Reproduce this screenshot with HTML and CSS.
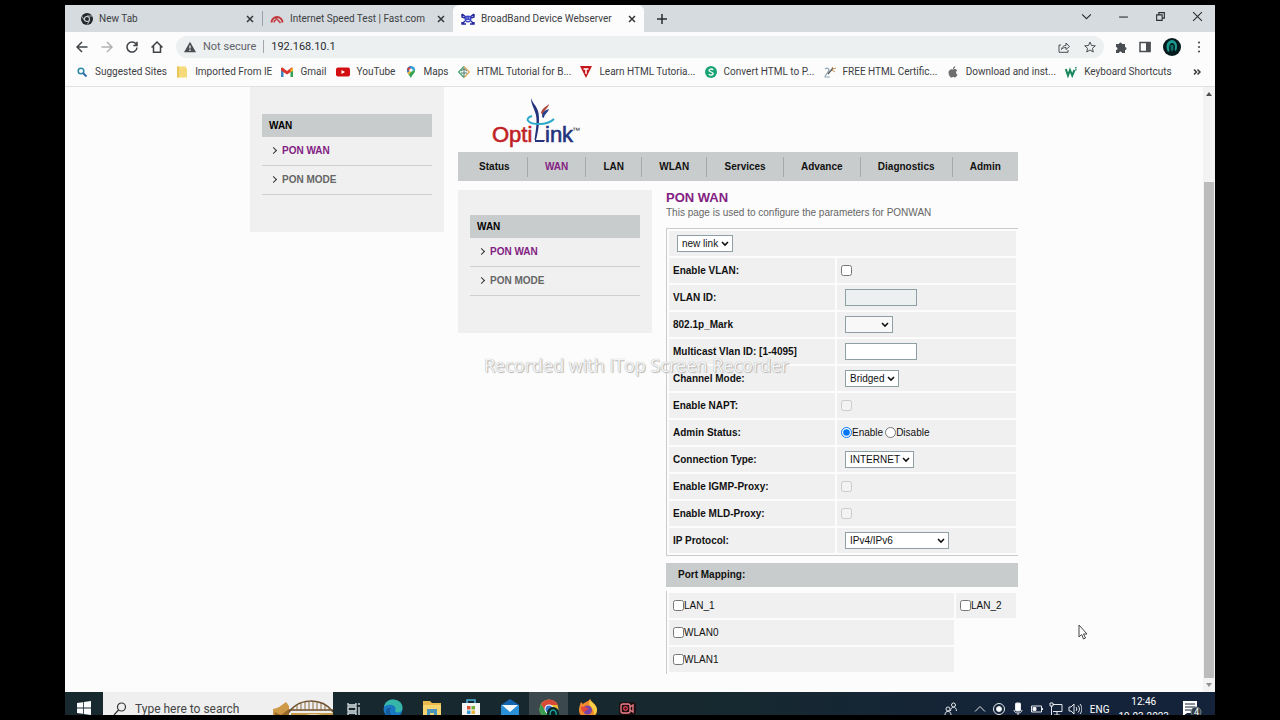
FILE: index.html
```html
<!DOCTYPE html>
<html lang="en">
<head>
  <meta charset="UTF-8">
  <meta name="viewport" content="width=device-width, initial-scale=1.0">
  <title>BroadBand Device Webserver</title>
  <link rel="stylesheet" href="styles.css">
</head>
<body>
  <div class="screen">
    <header class="tabs">
      <div class="tab">
        <svg class="icon" viewBox="0 0 12 12"><circle cx="6" cy="6" r="6" fill="#24282c"/><circle cx="6" cy="6" r="3" fill="#d6dbdf"/><circle cx="6" cy="6" r="2" fill="#24282c"/><path d="M6 3h5M3.4 7.5L1 3.4M8.6 7.5L6.2 11.6" stroke="#d6dbdf" stroke-width=".8"/></svg>
        <span class="tab-title">New Tab</span>
        <button class="tab-close" aria-label="Close tab"><svg viewBox="0 0 8 8"><path d="M1 1l6 6M7 1L1 7"/></svg></button>
      </div>
      <div class="tab divided">
        <svg class="icon wide" viewBox="0 0 14 12"><path d="M1.500 9.500A5.500 5.500 0 0 1 12.500 9.500" fill="none" stroke="#c2373b" stroke-width="2"/><path d="M4 9.500A3 3 0 0 1 6 6.800M10.500 10L5.500 4.500" fill="none" stroke="#c2373b" stroke-width="1.500"/></svg>
        <span class="tab-title">Internet Speed Test | Fast.com</span>
        <button class="tab-close" aria-label="Close tab"><svg viewBox="0 0 8 8"><path d="M1 1l6 6M7 1L1 7"/></svg></button>
      </div>
      <div class="tab active">
        <svg class="icon wide" viewBox="0 0 14 12"><path d="M1 1l4 3M13 1L9 4M4 8l-3 3M10 8l3 3M1 1v3l3 1M13 1v3l-3 1M1 9v2h4M13 9v2H9" fill="none" stroke="#20249a" stroke-width="1.400"/><circle cx="7" cy="6" r="3.400" fill="#3b45c8"/><path d="M5.500 5h1M8 5h1M5.500 7.500h3" stroke="#fff" stroke-width=".9"/></svg>
        <span class="tab-title">BroadBand Device Webserver</span>
        <button class="tab-close" aria-label="Close tab"><svg viewBox="0 0 8 8"><path d="M1 1l6 6M7 1L1 7"/></svg></button>
      </div>
      <button class="new-tab" aria-label="New tab"><svg viewBox="0 0 10 10"><path d="M5 0v10M0 5h10"/></svg></button>
      <div class="window-buttons">
        <button aria-label="Search tabs"><svg viewBox="0 0 10 10"><path d="M1 3l4 4 4-4"/></svg></button>
        <button aria-label="Minimize"><svg viewBox="0 0 10 10"><path d="M1 5.500h8"/></svg></button>
        <button aria-label="Restore"><svg viewBox="0 0 10 10"><path d="M1.500 3.500h5v5h-5zM3.500 3.500v-2h5v5h-2"/></svg></button>
        <button aria-label="Close"><svg viewBox="0 0 10 10"><path d="M1 1l8 8M9 1L1 9"/></svg></button>
      </div>
    </header>

    <div class="toolbar">
      <div class="nav-buttons">
        <button aria-label="Back"><svg viewBox="0 0 12 12"><path d="M11.500 6H1.500M6 1L1 6l5 5"/></svg></button>
        <button class="off" aria-label="Forward" disabled><svg viewBox="0 0 12 12"><path d="M.5 6h10M6 1l5 5-5 5"/></svg></button>
        <button aria-label="Reload"><svg viewBox="0 0 12 12"><path d="M10.300 3.500A5 5 0 1 0 11 6.500M11 .8v3.700H7.300"/></svg></button>
        <button aria-label="Home"><svg viewBox="0 0 12 12"><path d="M.5 6.500L6 1l5.500 5.500M2.500 5v6.300h7V5"/></svg></button>
      </div>
      <div class="omnibox">
        <svg class="icon" viewBox="0 0 12 12"><path d="M6 .8L12 11.300H0z" fill="#4a4e52"/><path d="M6 4.500v3M6 8.500V10" stroke="#fff" stroke-width="1.200"/></svg>
        <span class="not-secure">Not secure</span>
        <input type="text" value="192.168.10.1" aria-label="Address">
        <svg class="icon line" viewBox="0 0 12 12"><path d="M3 4H1v7.300h9V9M3.500 8.500C4 5.500 6 4.500 8 4.500V2l3.500 3.500L8 8.500v-2C6 6.500 4.700 7 3.500 8.500z"/></svg>
        <svg class="icon line star" viewBox="0 0 12 12"><path d="M6 1l1.500 3.500 3.800.3-2.900 2.500.9 3.700L6 9l-3.300 2 .9-3.700L.7 4.800l3.800-.3z"/></svg>
      </div>
      <div class="tool-icons">
        <svg class="icon" viewBox="0 0 12 12"><path d="M1 3h3a1.500 1.500 0 1 1 3 0h3v3a1.500 1.500 0 1 1 0 3v3H7a1.500 1.500 0 1 0-3 0H1V9a1.500 1.500 0 1 0 0-3z" fill="#4a4e52"/></svg>
        <svg class="icon" viewBox="0 0 12 12"><path d="M1 1.500h10v9H1z" fill="none" stroke="#4a4e52" stroke-width="1.500"/><path d="M7 1h4.500v10H7z" fill="#4a4e52"/></svg>
        <svg class="avatar" viewBox="0 0 18 18"><circle cx="9" cy="9" r="9" fill="#051a1c"/><path d="M5 14C1 6 6 2 9 2s7 4 4 11l-1.500-1C13 7 11 5 9 5s-3.500 3-2.500 8z" fill="#1a9a90"/><path d="M7.500 7h3v4l-1.500 3-1.500-3z" fill="#0f6d68"/></svg>
        <svg class="icon" viewBox="0 0 12 12"><g fill="#4a4e52"><circle cx="6" cy="1.500" r="1.100"/><circle cx="6" cy="6" r="1.100"/><circle cx="6" cy="10.500" r="1.100"/></g></svg>
      </div>
    </div>

    <nav class="bookmarks">
      <a href="#"><svg class="icon" viewBox="0 0 12 12"><circle cx="5" cy="5" r="2.800" fill="none" stroke="#2b87a8" stroke-width="1.500"/><path d="M7 7l3.500 3.500" stroke="#2b66a8" stroke-width="1.800"/></svg>Suggested Sites</a>
      <a href="#"><svg class="icon" viewBox="0 0 12 12"><path d="M1 .5h9v2h1v9H1z" fill="#f6d978"/><path d="M1 .5h2v11H1z" fill="#e8c65c"/></svg>Imported From IE</a>
      <a href="#"><svg class="icon" viewBox="0 0 12 12"><path d="M0 3h2.500v8H0z" fill="#4285c4"/><path d="M9.500 3H12v8H9.500z" fill="#35a257"/><path d="M0 2l1.500-.5L6 5l4.500-3.500L12 2v2.500L6 8.500 0 4.500z" fill="#d8362f"/><path d="M9.500 3L12 2v3L9.500 6z" fill="#f2b824"/></svg>Gmail</a>
      <a href="#"><svg class="icon wide" viewBox="0 0 14 12"><rect y="1.500" width="14" height="9" rx="2" fill="#d30e12"/><path d="M5.500 4v4L9 6z" fill="#fff"/></svg>YouTube</a>
      <a href="#"><svg class="icon" viewBox="0 0 12 12"><path d="M6 12C5 8.500 1.800 7.500 1.800 4.300A4.200 4.200 0 0 1 6 0v4z" fill="#3a76d5"/><path d="M6 0a4.200 4.200 0 0 1 4.200 4.300H6z" fill="#37a3d8"/><path d="M10.200 4.300C10 7.500 7 8.500 6 12L3 7.500l4-3.200z" fill="#30a354"/><path d="M2.500 7L5 4.500 6 6 4 8.800z" fill="#f3bb2b"/><path d="M2 3l2-2 2 2-2 2z" fill="#d8452f"/><circle cx="6" cy="4.200" r="1.600" fill="#fff"/></svg>Maps</a>
      <a href="#"><svg class="icon" viewBox="0 0 12 12"><path d="M6 .5L.7 6 6 11.500" fill="none" stroke="#4fa578" stroke-width="1.400"/><path d="M6 .5L11.300 6 6 11.500" fill="none" stroke="#dcaa63" stroke-width="1.400"/><path d="M6 2v9M3 5l3-2 3 2M3 7h6" fill="none" stroke="#4c7d70"/></svg>HTML Tutorial for B...</a>
      <a href="#"><svg class="icon" viewBox="0 0 12 12"><path d="M0 0h12L6 12z" fill="#c5161b"/><path d="M3.500 3h5M6 3v5" stroke="#fff" stroke-width="1.500"/></svg>Learn HTML Tutoria...</a>
      <a href="#"><svg class="icon" viewBox="0 0 12 12"><circle cx="6" cy="6" r="6" fill="#18a573"/><path d="M8.300 3.700C6.500 2.500 4 3 4 4.500S8.200 6 8.200 7.600 5.300 9.500 3.700 8.300" fill="none" stroke="#fff" stroke-width="1.300"/></svg>Convert HTML to P...</a>
      <a href="#"><svg class="icon" viewBox="0 0 12 12"><path d="M1 3c3-2 5 0 3 3S1 10 1 11h5" fill="none" stroke="#8fa7b5" stroke-width="1.200"/><path d="M4 8l5-6" stroke="#555" stroke-width="1.300"/><path d="M8 1l1.500 2L12 2M8 4l3 2" fill="none" stroke="#c78b4c"/></svg>FREE HTML Certific...</a>
      <a href="#"><svg class="icon" viewBox="0 0 12 12"><path d="M6 3.500c1-.7 3-.8 4.200.8-1.700 1.200-1.400 3.500.3 4.300C9.800 10.500 8.500 12 7.500 11.500 6.500 11 5.800 11 5 11.400 3.500 12.200 1.500 9 1.500 6.500S4 2.500 6 3.500zM6 3C6 1.500 7 .3 8.200.2 8.300 1.700 7.200 3 6 3z" fill="#6d6f71"/></svg>Download and inst...</a>
      <a href="#"><svg class="icon" viewBox="0 0 12 12"><path d="M.8 3l2.200 6.500L5 4l2.200 5.500L9.500 4" fill="none" stroke="#16865c" stroke-width="2"/><path d="M10 1.500h1.500L10.500 3l1 1H10" fill="none" stroke="#16865c" stroke-width=".8"/></svg>Keyboard Shortcuts</a>
      <button class="more" aria-label="More bookmarks"><svg viewBox="0 0 8 8"><path d="M1 1.500L3.500 4 1 6.500M4.500 1.500L7 4 4.500 6.500"/></svg></button>
    </nav>

    <div class="viewport">
      <main class="page">
        <aside class="side outer">
          <h3>WAN</h3>
          <ul>
            <li class="current"><a href="#">PON WAN</a></li>
            <li><a href="#">PON MODE</a></li>
          </ul>
        </aside>

        <div class="site">
          <div class="logo">
            <svg viewBox="0 0 90 52" role="img" aria-label="OptiLink">
              <text x="0" y="45" class="logo-red">Opti</text>
              <text x="53" y="45" class="logo-blue">ink</text>
              <text x="80" y="36" class="logo-tm">™</text>
              <path d="M39 1c2 6 5 7 7 13 2 7 1 18-2 29h-1.500C44 32 46 22 43 15c-1-4-4-8-4-14z" fill="#23337c"/>
              <path d="M49 16c1-5 5-6 8-9-1 5-5 5-6 11z" fill="#b0453a"/>
              <path d="M50 20c0-5 3-7 7-8-1 4-5 5-5 9z" fill="#28408c"/>
              <path d="M40 19c-9 3-3 8 7 8 8 0 13-3 15-5" fill="none" stroke="#2ba9c9" stroke-width="2"/>
              <path d="M43 43h10l-1 2h-9z" fill="#23337c"/>
            </svg>
          </div>
          <nav class="menu">
            <a href="#">Status</a>
            <a href="#" class="current">WAN</a>
            <a href="#">LAN</a>
            <a href="#">WLAN</a>
            <a href="#">Services</a>
            <a href="#">Advance</a>
            <a href="#">Diagnostics</a>
            <a href="#">Admin</a>
          </nav>

          <div class="columns">
            <aside class="side">
              <h3>WAN</h3>
              <ul>
                <li class="current"><a href="#">PON WAN</a></li>
                <li><a href="#">PON MODE</a></li>
              </ul>
            </aside>

            <form class="content">
              <h1>PON WAN</h1>
              <p class="intro">This page is used to configure the parameters for PONWAN</p>

              <table class="settings">
                <tr><td colspan="2"><select class="w-link" aria-label="Link"><option>new link</option></select></td></tr>
                <tr><th><label for="vlan">Enable VLAN:</label></th><td><input type="checkbox" id="vlan"></td></tr>
                <tr><th><label for="vid">VLAN ID:</label></th><td><input type="text" id="vid" disabled></td></tr>
                <tr><th><label for="mark">802.1p_Mark</label></th><td><select id="mark" class="w-mark" disabled><option></option></select></td></tr>
                <tr><th><label for="mvid">Multicast Vlan ID: [1-4095]</label></th><td><input type="text" id="mvid"></td></tr>
                <tr><th><label for="mode">Channel Mode:</label></th><td><select id="mode" class="w-mode"><option>Bridged</option></select></td></tr>
                <tr><th><label for="napt">Enable NAPT:</label></th><td><input type="checkbox" id="napt" disabled></td></tr>
                <tr><th>Admin Status:</th><td><div class="choices"><label><input type="radio" name="status" checked>Enable</label><label><input type="radio" name="status">Disable</label></div></td></tr>
                <tr><th><label for="ctype">Connection Type:</label></th><td><select id="ctype" class="w-type"><option>INTERNET</option></select></td></tr>
                <tr><th><label for="igmp">Enable IGMP-Proxy:</label></th><td><input type="checkbox" id="igmp" disabled></td></tr>
                <tr><th><label for="mld">Enable MLD-Proxy:</label></th><td><input type="checkbox" id="mld" disabled></td></tr>
                <tr><th><label for="proto">IP Protocol:</label></th><td><select id="proto" class="w-proto"><option>IPv4/IPv6</option></select></td></tr>
              </table>

              <h2>Port Mapping:</h2>
              <table class="ports">
                <tr><td><label><input type="checkbox">LAN_1</label></td><td class="second"><label><input type="checkbox">LAN_2</label></td></tr>
                <tr><td><label><input type="checkbox">WLAN0</label></td></tr>
                <tr><td><label><input type="checkbox">WLAN1</label></td></tr>
              </table>
            </form>
          </div>
        </div>
      </main>
      <div class="scrollbar"><span class="up"></span><span class="thumb"></span><span class="down"></span></div>
      <svg class="pointer" viewBox="0 0 10 16"><path d="M1 1v12l2.700-2.500L5.500 15l2-1-2-4H9z" fill="#fff" stroke="#444"/></svg>
    </div>

    <footer class="taskbar">
      <button class="start" aria-label="Start"><svg viewBox="0 0 14 14"><path d="M0 2l6-.8V6.600H0zM6.800 1.100L14 0v6.600H6.800zM0 7.400h6v5.400L0 12zM6.800 7.400H14V14l-7.200-1.100z" fill="#fff"/></svg></button>
      <div class="search">
        <svg class="search-icon" viewBox="0 0 14 14"><circle cx="8.500" cy="5" r="4" fill="none" stroke="#333" stroke-width="1.200"/><path d="M5.500 8L1 13" stroke="#333" stroke-width="1.200"/></svg>
        <input type="text" placeholder="Type here to search" aria-label="Search">
        <svg class="bridge" viewBox="0 0 60 20"><path d="M14 16C24-2 49-2 60 13M14 11h46" fill="none" stroke="#6d5030" stroke-width="1.500"/><path d="M20 12V8M24 12V5M28 12V3M32 12V2M36 12V2M40 12V2M44 12V2M48 12V4M52 12V6M56 12V9" stroke="#8a683d"/><path d="M18 14h42v5c-12-5-28-5-42 1z" fill="#c89a48"/><path d="M0 10c6-1 7-3 13-7l3 4v13H0z" fill="#cf9a48"/><path d="M2 13l6 3 8-6v10H0z" fill="#9a6a2a"/></svg>
      </div>
      <div class="apps">
        <button aria-label="Task view"><svg viewBox="0 0 16 16"><path d="M2 2v2h8V2M2 14v-2h8v2M2 6h8v4H2zM13 2v2M13 6v9" fill="none" stroke="#dfe5e7" stroke-width="1.300"/></svg></button>
        <button aria-label="Edge"><svg viewBox="0 0 20 20"><circle cx="10" cy="10" r="9.500" fill="#1a78c2"/><path d="M1 8C2 2 7 .5 10 .5c6 0 9.500 4 9.500 8 0 3-2 5-5 5-2 0-3-1-2-2.500C14 6 5 4 1 8z" fill="#35b6a8"/><path d="M8 9c-3 4 0 8 4 9-5 2-9-1-9-5 0-3 2-5 5-4z" fill="#165a9c"/></svg></button>
        <button aria-label="Explorer"><svg viewBox="0 0 20 20"><path d="M1 2h7l2 2h9v14H1z" fill="#e9b94b"/><path d="M1 6h18v12H1z" fill="#f5d572"/><path d="M5 10h10v8h-3v-4H8v4H5z" fill="#4b94bc"/></svg></button>
        <button aria-label="Store"><svg viewBox="0 0 20 20"><path d="M6 4V1h8v3" fill="none" stroke="#4fb2df" stroke-width="1.500"/><path d="M1 4h18v15H1z" fill="#f4f4f4"/><path d="M6 7h3.500v3.500H6z" fill="#dc5234"/><path d="M10.500 7H14v3.500h-3.500z" fill="#75ad35"/><path d="M6 11.500h3.500V15H6z" fill="#359bd8"/><path d="M10.500 11.500H14V15h-3.500z" fill="#eab43a"/></svg></button>
        <button aria-label="Mail"><svg viewBox="0 0 20 20"><path d="M1 6l9-6 9 6z" fill="#1465b0"/><path d="M1 6h18v13H1z" fill="#2a91d8"/><path d="M2 6h16l-8 7z" fill="#f2f7fa"/></svg></button>
        <button class="running" aria-label="Chrome"><svg viewBox="0 0 20 20"><circle cx="10" cy="10" r="9.500" fill="#e9bd35"/><path d="M2 5c5-7 14-5 17 1h-9L6 12z" fill="#d84a38"/><path d="M2 5l5 8 3 6C2 19-2 12 2 5z" fill="#3a9a50"/><circle cx="10" cy="10" r="4.500" fill="#fff"/><circle cx="10" cy="10" r="3.500" fill="#3c78d0"/><circle cx="14" cy="14" r="6" fill="#062426"/><path d="M12 19c-2-6 0-8 2-8s4 2 3 7" fill="none" stroke="#21a79c" stroke-width="1.300"/></svg></button>
        <button aria-label="Firefox"><svg viewBox="0 0 20 20"><path d="M3 3l2 2C8 2 10 3 12 0c1 3 7 5 7 11 0 5-4 9-9 9s-9-4-9-9c0-3 1-5 2-8z" fill="#f08a2c"/><path d="M12 0c0 3 7 5 7 11 0 3-3 5-3 5 1-6-4-8-5-11z" fill="#f9cf46"/><circle cx="9.500" cy="11" r="4.500" fill="#7745a8"/><path d="M3 8c4-1 6 1 8 2-3 0-3 3-5 3s-3-3-3-5z" fill="#e4473e"/></svg></button>
        <button aria-label="Screen recorder"><svg viewBox="0 0 20 20"><rect x="2" y="3" width="17" height="13" rx="3" fill="#1d1012"/><rect x="4" y="5" width="9" height="9" rx="2" fill="none" stroke="#f0808c" stroke-width="1.300"/><path d="M13 8l3-2v7l-3-2" fill="none" stroke="#f0808c" stroke-width="1.300"/><circle cx="8.500" cy="9.500" r="1.800" fill="none" stroke="#e94055" stroke-width="1.300"/></svg></button>
      </div>
      <div class="tray">
        <svg class="people" viewBox="0 0 14 14"><circle cx="9.500" cy="3" r="2"/><circle cx="4" cy="7" r="2"/><path d="M6.500 9c0-5 6-5 6 0M1 13c0-5 6-5 6 0"/></svg>
        <svg viewBox="0 0 14 14"><path d="M2 9.500l5-5 5 5"/></svg>
        <svg viewBox="0 0 14 14"><circle cx="7" cy="7" r="5.500"/><circle cx="7" cy="7" r="2.500" fill="#fff"/></svg>
        <svg viewBox="0 0 14 14"><rect x="4.500" y="1" width="5" height="8" rx="1" fill="#fff"/><path d="M3 8c0 4 8 4 8 0M7 11v3"/></svg>
        <svg viewBox="0 0 14 14"><path d="M1.500 4h10v6h-10zM12.500 6v2"/><path d="M3 5.500h3v3H3z" fill="#fff"/></svg>
        <svg viewBox="0 0 14 14"><path d="M4 2.500h9v7H4M8 10v3M5 13h6M1 1v3h3V1zM2.500 4v9"/></svg>
        <svg viewBox="0 0 14 14"><path d="M1 5h2l3-3v10L3 9H1zM8 5c1 1 1 3 0 4M10 3.500c2 2 2 5 0 7M12 2c2.500 3 2.500 7 0 10"/></svg>
        <span class="lang">ENG</span>
        <div class="clock"><span>12:46</span><span>19-03-2023</span></div>
        <svg class="notice" viewBox="0 0 20 18"><path d="M1 1h14v12H5l-4 3z" fill="#fff" stroke="none"/><path d="M3 4h10M3 7h10M3 10h6" stroke="#14233a"/><circle cx="14" cy="12" r="5" fill="#333d46" stroke="#7b848b"/><text x="12" y="15">4</text></svg>
      </div>
    </footer>
    <div class="watermark">Recorded with iTop Screen Recorder</div>
  </div>
</body>
</html>
```
FILE: styles.css
```css
* {
  box-sizing: border-box;
}

body {
  margin: 0;
  padding: 5px 65px;
  height: 100vh;
  background-color: #000;
  font-family: Roboto, "Open Sans", sans-serif;
  font-size: 10px;
  color: #3c4043;
}

button {
  background: none;
  border: none;
  padding: 0;
  cursor: pointer;
}

a {
  color: inherit;
  text-decoration: none;
}

.screen {
  position: relative;
  display: flex;
  flex-direction: column;
  height: 100%;
  overflow: hidden;
  background-color: #fcfcfc;
}

.icon {
  width: 12px;
  height: 12px;
  flex: none;
}

.icon.wide {
  width: 14px;
}

/* browser tabs */
.tabs {
  display: flex;
  align-items: stretch;
  flex: none;
  height: 27px;
  background-color: #d6dbdf;
}

.tab {
  display: flex;
  align-items: center;
  gap: 6px;
  width: 191px;
  padding: 0 8px 0 13px;
}

.tab:first-child {
  width: 197px;
  padding-left: 16px;
}

.tab.divided {
  position: relative;
  padding-left: 8px;
}

.tab.divided::before {
  content: "";
  position: absolute;
  left: 0;
  top: 6px;
  height: 15px;
  border-left: 1px solid #9ba1a6;
}

.tab.active {
  background-color: #fcfcfc;
  border-radius: 6px 6px 0 0;
  padding-left: 8px;
}

.tab-title {
  flex: 1;
  white-space: nowrap;
}

.tab-close svg,
.more svg {
  display: block;
  width: 8px;
  height: 8px;
  stroke: #33373a;
  stroke-width: 1.5;
  fill: none;
}

.new-tab {
  margin-left: 13px;
}

.new-tab svg {
  display: block;
  width: 10px;
  height: 10px;
  stroke: #2a2d30;
  stroke-width: 1.5;
}

.window-buttons {
  display: flex;
  align-items: center;
  gap: 26px;
  margin-left: auto;
  padding: 0 12px 4px 0;
}

.window-buttons svg {
  display: block;
  width: 11px;
  height: 11px;
  stroke: #2a2d30;
  fill: none;
}

/* toolbar */
.toolbar {
  display: flex;
  align-items: center;
  flex: none;
  height: 29px;
  padding: 0 10px 0 11px;
}

.nav-buttons {
  display: flex;
  gap: 13px;
}

.nav-buttons svg {
  display: block;
  width: 12px;
  height: 12px;
  stroke: #3f4347;
  stroke-width: 1.5;
  fill: none;
}

.nav-buttons .off {
  opacity: 0.4;
}

.omnibox {
  display: flex;
  align-items: center;
  flex: 1;
  height: 22px;
  margin: 0 11px 0 13px;
  padding: 0 8px;
  border-radius: 11px;
  background-color: #edf0f1;
  font-size: 11px;
}

.not-secure {
  margin-left: 7px;
  padding-right: 7px;
  border-right: 1px solid #a3a7aa;
  line-height: 13px;
  color: #5f6368;
}

.omnibox input {
  flex: 1;
  min-width: 0;
  border: none;
  background: none;
  padding: 0 7px;
  font: inherit;
  color: #2a2d30;
}

.line {
  fill: none;
  stroke: #4a4e52;
}

.star {
  margin-left: 14px;
}

.tool-icons {
  display: flex;
  align-items: center;
  gap: 12px;
}

.tool-icons .avatar {
  width: 18px;
  height: 18px;
}

/* bookmarks */
.bookmarks {
  display: flex;
  align-items: center;
  justify-content: space-between;
  flex: none;
  height: 26px;
  padding: 0 14px 4px 11px;
  border-bottom: 1px solid #dfe1e2;
}

.bookmarks a {
  display: flex;
  align-items: center;
  gap: 7px;
  white-space: nowrap;
}

.more {
  margin-left: 12px;
}

/* page area */
.viewport {
  position: relative;
  display: flex;
  flex: 1;
  min-height: 0;
  overflow: hidden;
  font-family: Arial, "Liberation Sans", sans-serif;
  color: #111;
}

.page {
  display: flex;
  justify-content: center;
  align-items: flex-start;
  flex: 1;
  gap: 14px;
}

.side {
  flex: none;
  width: 194px;
  height: 143px;
  padding: 25px 12px 0;
  background-color: #f0f0f0;
}

.side.outer {
  height: 145px;
  padding-top: 27px;
}

.side h3 {
  margin: 0;
  padding-left: 7px;
  line-height: 23px;
  font-size: 10px;
  background-color: #c9cccc;
  color: #000;
}

.side ul {
  margin: 0;
  padding: 0;
  list-style: none;
}

.side li {
  display: flex;
  align-items: center;
  gap: 6px;
  height: 29px;
  padding: 0 0 2px 9px;
  border-bottom: 1px solid #cfcfcf;
  font-weight: bold;
  color: #666;
}

.side li::before {
  content: "";
  width: 4px;
  height: 4px;
  border: solid #333;
  border-width: 1px 1px 0 0;
  transform: rotate(45deg);
}

.side .current,
.menu .current {
  color: #832183;
}

.site {
  width: 560px;
}

.logo {
  height: 65px;
  padding: 10px 0 0 34px;
}

.logo svg {
  display: block;
  width: 90px;
  height: 52px;
}

.logo text {
  font-size: 22px;
}

.logo .logo-red {
  fill: #c01f25;
  stroke: #c01f25;
  stroke-width: 0.6;
}

.logo .logo-blue {
  fill: #23337c;
  stroke: #23337c;
  stroke-width: 0.6;
}

.logo .logo-tm {
  font-size: 8px;
  fill: #333;
}

.menu {
  display: flex;
  align-items: center;
  height: 29px;
  background-color: #c9cccc;
  font-weight: bold;
}

.menu a {
  flex: auto;
  padding-bottom: 1px;
  line-height: 19px;
  text-align: center;
  border-right: 1px solid #a5a9a9;
}

.menu a:first-child {
  padding-left: 4px;
}

.menu a:last-child {
  border-right: none;
}

.columns {
  display: flex;
  align-items: flex-start;
  gap: 14px;
  padding-top: 9px;
}

.content {
  flex: 1;
  min-width: 0;
}

.content h1 {
  margin: 0;
  font-size: 13px;
  line-height: 15px;
  color: #832183;
}

.intro {
  margin: 0 0 8px;
  line-height: 15px;
  color: #666;
}

table {
  width: 100%;
  border-spacing: 2px;
  border-left: 1px solid #ccc;
}

.settings {
  border-top: 1px solid #ccc;
  border-bottom: 1px solid #ccc;
}

th,
td {
  height: 25px;
  padding: 0 4px;
  background-color: #f0f0f0;
  text-align: left;
  font-size: 10px;
}

th {
  width: 166px;
}

.settings input[type="text"],
select {
  display: block;
  height: 17px;
  margin-left: 4px;
  border: 1px solid #8fa0a5;
  background-color: #fff;
  font-family: inherit;
  font-size: 10px;
}

.settings input[type="text"] {
  width: 72px;
}

.settings input[type="text"]:disabled {
  background-color: #edf0f0;
}

select {
  appearance: none;
  padding: 0 0 0 4px;
  border-radius: 0;
  color: #111;
  background-image: url("data:image/svg+xml,%3Csvg xmlns='http://www.w3.org/2000/svg' viewBox='0 0 8 6'%3E%3Cpath d='M1 1l3 3 3-3' fill='none' stroke='%23111' stroke-width='1.6'/%3E%3C/svg%3E");
  background-repeat: no-repeat;
  background-position: right 3px center;
  background-size: 8px 6px;
}

select:disabled {
  opacity: 1;
  background-color: #f8f8f8;
}

.w-link {
  width: 56px;
}

.w-mark {
  width: 48px;
}

.w-mode {
  width: 54px;
}

.w-type {
  width: 69px;
}

.w-proto {
  width: 104px;
}

input[type="checkbox"],
input[type="radio"] {
  display: block;
  width: 11px;
  height: 11px;
  margin: 0;
}

.choices {
  display: flex;
  gap: 2px;
}

.choices label,
.ports label {
  display: flex;
  align-items: center;
}

.content h2 {
  margin: 7px 0 4px;
  padding-left: 12px;
  line-height: 24px;
  font-size: 10px;
  background-color: #c9cccc;
}

.ports .second {
  width: 60px;
}

.scrollbar {
  display: flex;
  flex-direction: column;
  align-items: center;
  width: 12px;
  padding: 5px 0;
  background-color: #f3f3f3;
}

.scrollbar .up,
.scrollbar .down {
  border: 3px solid transparent;
  border-top: none;
  border-bottom: 4px solid #505050;
}

.scrollbar .down {
  border-top: 4px solid #909090;
  border-bottom: none;
}

.scrollbar .thumb {
  width: 10px;
  flex: 1;
  margin: 86px 0 5px;
  background-color: #bcbcbc;
}

.pointer {
  position: absolute;
  left: 1013px;
  top: 537px;
  width: 10px;
  height: 16px;
}

.watermark {
  position: absolute;
  left: 419px;
  top: 347px;
  font-family: "Open Sans", sans-serif;
  font-size: 18px;
  line-height: 26px;
  white-space: nowrap;
  color: #f6f6f6;
  text-shadow: 0 0 1px #999, 1px 1px 1px #bbb;
}

/* taskbar, runs past the bottom edge of the screen */
.taskbar {
  display: flex;
  align-items: flex-start;
  flex: none;
  height: 23px;
  overflow: hidden;
  background: linear-gradient(to right, #17292f 55%, #14233a 85%);
  color: #fff;
}

.start {
  flex: none;
  width: 38px;
  height: 34px;
}

.start svg {
  width: 14px;
  height: 14px;
}

.search {
  display: flex;
  align-items: center;
  width: 230px;
  height: 34px;
  padding-left: 10px;
  background-color: #efefef;
}

.search-icon {
  flex: none;
  width: 14px;
  height: 14px;
}

.search input {
  flex: 1;
  min-width: 0;
  padding: 0 0 0 8px;
  border: none;
  background: none;
  font: inherit;
  font-size: 12px;
}

.search input::placeholder {
  color: #444;
}

.bridge {
  align-self: flex-start;
  width: 60px;
  height: 20px;
  margin-top: 7px;
}

.apps {
  display: flex;
  padding-left: 1px;
}

.apps button {
  width: 39px;
  height: 34px;
}

.apps svg {
  display: block;
  width: 20px;
  height: 20px;
  margin: 0 auto;
}

.apps button:first-child svg {
  width: 16px;
  height: 16px;
}

.apps .running {
  background-color: #3b484e;
}

.tray {
  display: flex;
  align-items: center;
  gap: 5px;
  height: 34px;
  margin-left: auto;
  padding-right: 13px;
}

.tray svg {
  width: 14px;
  height: 14px;
  stroke: #e4e8ec;
  fill: none;
}

.tray .people {
  margin-right: 10px;
}

.lang {
  margin-left: 3px;
}

.clock {
  display: flex;
  flex-direction: column;
  align-items: center;
  margin: 0 8px 0 4px;
  line-height: 15px;
}

.tray .notice {
  width: 20px;
  height: 18px;
}

.tray .notice text {
  font-size: 9px;
  fill: #fff;
  stroke: none;
}
```
